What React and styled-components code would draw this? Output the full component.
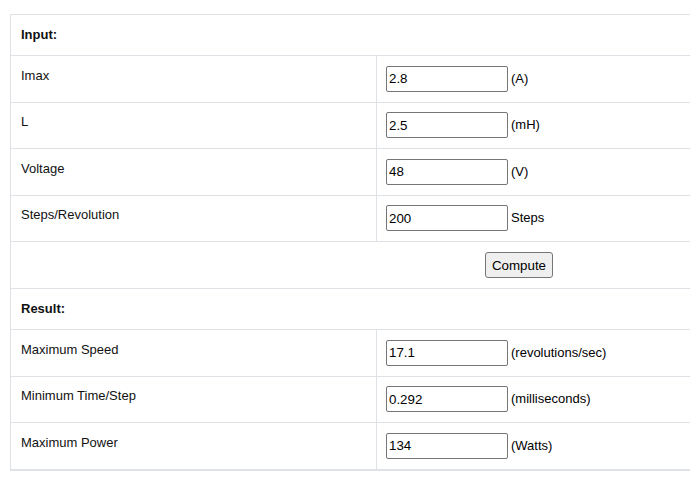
import React from "react";
import styled, { createGlobalStyle } from "styled-components";

const Global = createGlobalStyle`
  html, body { margin: 0; padding: 0; background: #fff; }
  body { font-family: "Liberation Sans", Arial, sans-serif; font-size: 13px; color: #111; overflow: hidden; }
`;

const Page = styled.div`
  padding: 14px 0 0 10px;
  overflow: hidden;
`;

const Table = styled.table`
  width: 1018px;
  border-collapse: collapse;
  border: 1px solid #dee2e6;
  border-bottom: 2px solid #dee2e6;
`;

const Row = styled.tr`
  border-top: 1px solid #dee2e6;
`;

const Cell = styled.td`
  padding: ${(p) => (p.$label ? "9.75px" : "10px")} 10px;
  line-height: 20px;
  vertical-align: top;
  text-align: ${(p) => (p.$center ? "center" : "left")};
  font-weight: ${(p) => (p.$bold ? "bold" : "normal")};
  width: ${(p) => (p.$label ? "345px" : "auto")};
  border-right: ${(p) => (p.$label ? "1px solid #dee2e6" : "none")};
`;

const ValueCell = styled.td`
  padding: 9.75px 9px;
  vertical-align: top;
`;

const Field = styled.div`
  display: flex;
  align-items: center;
  gap: 3px;
  height: 26px;
  white-space: nowrap;
`;

const Input = styled.input`
  box-sizing: border-box;
  width: 122px;
  height: 26px;
  margin: 0;
  padding: 1px 2px;
  border: 1px solid #767676;
  border-radius: 2px;
  font-family: "Liberation Sans", Arial, sans-serif;
  font-size: 13.33px;
  color: #000;
`;

const Unit = styled.span`
  color: #000;
  line-height: 20px;
`;

const Button = styled.button`
  box-sizing: border-box;
  height: 26px;
  margin: 0;
  padding: 1px 6px;
  border: 1px solid #767676;
  border-radius: 3px;
  background: #efefef;
  font-family: "Liberation Sans", Arial, sans-serif;
  font-size: 13.33px;
  color: #000;
  vertical-align: top;
`;

const inputs = [
  { label: "Imax", value: "2.8", unit: "(A)" },
  { label: "L", value: "2.5", unit: "(mH)" },
  { label: "Voltage", value: "48", unit: "(V)" },
  { label: "Steps/Revolution", value: "200", unit: "Steps" },
];

const results = [
  { label: "Maximum Speed", value: "17.1", unit: "(revolutions/sec)" },
  { label: "Minimum Time/Step", value: "0.292", unit: "(milliseconds)" },
  { label: "Maximum Power", value: "134", unit: "(Watts)" },
];

function DataRow({ label, value, unit }) {
  return (
    <Row>
      <Cell $label>{label}</Cell>
      <ValueCell>
        <Field>
          <Input defaultValue={value} />
          <Unit>{unit}</Unit>
        </Field>
      </ValueCell>
    </Row>
  );
}

export default function App() {
  return (
    <Page>
      <Global />
      <Table>
        <tbody>
          <Row>
            <Cell colSpan={2} $bold>Input:</Cell>
          </Row>
          {inputs.map((r) => (
            <DataRow key={r.label} {...r} />
          ))}
          <Row>
            <Cell colSpan={2} $center>
              <Button>Compute</Button>
            </Cell>
          </Row>
          <Row>
            <Cell colSpan={2} $bold>Result:</Cell>
          </Row>
          {results.map((r) => (
            <DataRow key={r.label} {...r} />
          ))}
        </tbody>
      </Table>
    </Page>
  );
}
